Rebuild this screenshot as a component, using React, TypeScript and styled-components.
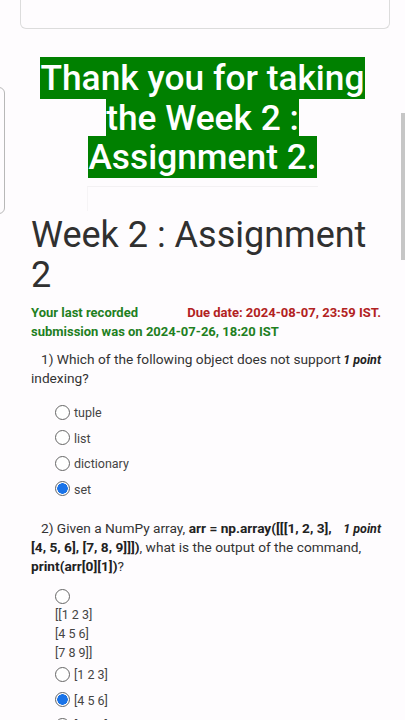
import styled, { createGlobalStyle } from 'styled-components';

const GlobalStyle = createGlobalStyle`
  html, body {
    margin: 0;
    padding: 0;
    background: #fefcfe;
  }
  body {
    font-family: Roboto, "Noto Sans", Arial, sans-serif;
    color: #333;
    overflow: hidden;
  }
`;

const Page = styled.div`
  position: relative;
  width: 405px;
  height: 720px;
  overflow: hidden;
`;

const TopCard = styled.div`
  height: 28px;
  margin: 0 15px 0 20px;
  border: 1px solid #dcdcdc;
  border-top: none;
  border-radius: 0 0 6px 6px;
  background: #fefcfe;
`;

const SideEdge = styled.div`
  position: absolute;
  left: -12px;
  top: 87px;
  width: 15px;
  height: 125px;
  border: 1px solid #b8b8b8;
  border-radius: 6px;
`;

const ScrollThumb = styled.div`
  position: absolute;
  right: 0;
  top: 113px;
  width: 4px;
  height: 147px;
  background: #c6c6c6;
`;

const Banner = styled.h1`
  margin: 30px auto 0;
  width: 340px;
  text-align: center;
  font-size: 35.3px;
  font-weight: 500;
  line-height: 39.7px;
  color: #fff;
`;

const Highlight = styled.span`
  background: #008000;
`;

const Ghost = styled.div`
  margin: 8px auto 0;
  width: 230px;
  height: 24px;
  border-top: 1px solid #f3f1f3;
  border-left: 1px solid #f6f4f6;
`;

const Content = styled.div`
  padding: 0 24px 0 31px;
`;

const Heading = styled.h2`
  margin: 4px 0 0;
  font-size: 36px;
  font-weight: 400;
  line-height: 40px;
  color: #303030;
`;

const Meta = styled.div`
  margin-top: 8px;
  font-size: 13px;
  font-weight: 700;
  line-height: 19px;
  color: #1f801f;
  &::after {
    content: '';
    display: block;
    clear: both;
  }
`;

const DueDate = styled.span`
  float: right;
  color: #b22222;
`;

const Question = styled.div<{ $gap: number }>`
  margin-top: ${(p) => p.$gap}px;
  font-size: 13.7px;
  line-height: 19px;
  color: #333;
  text-indent: 10px;
`;

const Points = styled.span`
  float: right;
  font-weight: 700;
  font-style: italic;
  font-size: 12.5px;
  color: #222;
  text-indent: 0;
`;

const Code = styled.b`
  font-weight: 700;
  color: #222;
`;

const Options = styled.div<{ $top: number }>`
  margin-top: ${(p) => p.$top}px;
  padding-left: 24px;
  display: flex;
  flex-direction: column;
`;

const Option = styled.label`
  display: flex;
  align-items: center;
  gap: 4px;
  height: 25.5px;
  font-size: 12.5px;
  color: #444;
`;

const StackedOption = styled.label`
  display: flex;
  flex-direction: column;
  align-items: flex-start;
  padding-top: 1px;
  font-size: 12.5px;
  line-height: 19px;
  color: #444;
`;

const Radio = styled.span<{ $checked?: boolean }>`
  box-sizing: border-box;
  flex: none;
  width: 15px;
  height: 15px;
  border-radius: 50%;
  border: ${(p) => (p.$checked ? '1.5px solid #5f6368' : '1px solid #666')};
  background: ${(p) =>
    p.$checked ? 'radial-gradient(circle, #1a73e8 0 5px, #fff 5.5px)' : '#fff'};
  margin-bottom: 1px;
`;

export default function App() {
  const q1 = [
    { text: 'tuple', checked: false },
    { text: 'list', checked: false },
    { text: 'dictionary', checked: false },
    { text: 'set', checked: true },
  ];

  return (
    <Page>
      <GlobalStyle />
      <TopCard />
      <SideEdge />
      <ScrollThumb />
      <Banner>
        <Highlight>Thank you for taking the Week 2 : Assignment 2.</Highlight>
      </Banner>
      <Ghost />
      <Content>
        <Heading>Week 2 : Assignment 2</Heading>
        <Meta>
          <DueDate>Due date: 2024-08-07, 23:59 IST.</DueDate>
          Your last recorded submission was on 2024-07-26, 18:20 IST
        </Meta>
        <Question $gap={9}>
          <Points>1 point</Points>
          1) Which of the following object does not support indexing?
        </Question>
        <Options $top={12}>
          {q1.map((o) => (
            <Option key={o.text}>
              <Radio $checked={o.checked} />
              {o.text}
            </Option>
          ))}
        </Options>
        <Question $gap={17}>
          <Points>1 point</Points>
          2) Given a NumPy array, <Code>arr = np.array([[[1, 2, 3], [4, 5, 6], [7, 8, 9]]])</Code>, what is
          the output of the command, <Code>print(arr[0][1])</Code>?
        </Question>
        <Options $top={12}>
          <StackedOption>
            <Radio />
            <span>[[1 2 3]</span>
            <span>[4 5 6]</span>
            <span>[7 8 9]]</span>
          </StackedOption>
          <Option>
            <Radio />
            [1 2 3]
          </Option>
          <Option>
            <Radio $checked />
            [4 5 6]
          </Option>
          <Option>
            <Radio />
            [7 8 9]
          </Option>
        </Options>
      </Content>
    </Page>
  );
}
